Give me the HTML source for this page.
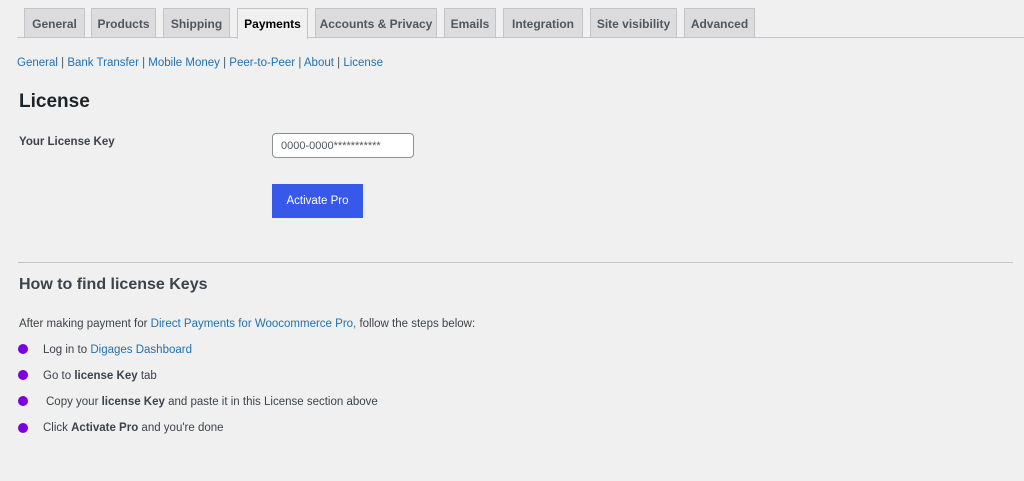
<!DOCTYPE html><html><head><style>
body{margin:0;background:#f0f0f1;font-family:"Liberation Sans",sans-serif;color:#1d2327;width:1024px;height:481px;overflow:hidden;position:relative}
.tab{position:absolute;top:8px;height:29px;background:#dcdcde;border:1px solid #c3c4c7;border-bottom:none;box-sizing:border-box;font-size:12px;font-weight:bold;color:#50575e;text-align:center;line-height:30px}
.tab.a{background:#f0f0f1;color:#000;height:31px}
.line{position:absolute;left:17px;right:0;top:37px;border-top:1px solid #c3c4c7}
a{color:#2271b1;text-decoration:none}
.abs{position:absolute;white-space:nowrap}
.b{position:absolute;left:18px;width:10px;height:10px;border-radius:50%;background:#7a00df}
.t{font-size:11.5px;color:#3c434a}
</style></head><body>
<div class="tab" style="left:24px;width:61px">General</div>
<div class="tab" style="left:91px;width:65px">Products</div>
<div class="tab" style="left:163px;width:67px">Shipping</div>
<div class="tab" style="left:315px;width:122px">Accounts &amp; Privacy</div>
<div class="tab" style="left:444px;width:52px">Emails</div>
<div class="tab" style="left:503px;width:80px">Integration</div>
<div class="tab" style="left:590px;width:87px">Site visibility</div>
<div class="tab" style="left:684px;width:71px">Advanced</div>
<div class="line"></div>
<div class="tab a" style="left:237px;width:71px">Payments</div>
<div class="abs" style="left:17px;top:57px;font-size:11.5px;color:#50575e"><a>General</a> | <a>Bank Transfer</a> | <a>Mobile Money</a> | <a>Peer-to-Peer</a> | <a>About</a> | <a>License</a></div>
<div class="abs" style="left:19px;top:91px;font-size:19px;font-weight:bold">License</div>
<div class="abs" style="left:19px;top:136px;font-size:11.5px;font-weight:bold;color:#3c434a">Your License Key</div>
<div class="abs" style="left:272px;top:133px;width:142px;height:25px;box-sizing:border-box;border:1px solid #8c8f94;border-radius:4px;background:#fff;font-size:11px;color:#50575e;line-height:25px;padding-left:8px">0000-0000***********</div>
<div class="abs" style="left:272px;top:184px;width:91px;height:34px;background:#3858e9;color:#fff;font-size:11.5px;text-align:center;line-height:34px">Activate Pro</div>
<div class="abs" style="left:18px;width:995px;top:262px;border-top:1px solid #c3c4c7"></div>
<div class="abs" style="left:19px;top:276px;font-size:16px;color:#3c434a;font-weight:600">How to find license Keys</div>
<div class="abs t" style="left:19px;top:318px">After making payment for <a>Direct Payments for Woocommerce Pro,</a> follow the steps below:</div>
<div class="b" style="top:344px"></div><div class="abs t" style="left:43px;top:344px">Log in to <a>Digages Dashboard</a></div>
<div class="b" style="top:370px"></div><div class="abs t" style="left:43px;top:370px">Go to <b>license Key</b> tab</div>
<div class="b" style="top:396px"></div><div class="abs t" style="left:46px;top:396px">Copy your <b>license Key</b> and paste it in this License section above</div>
<div class="b" style="top:423px"></div><div class="abs t" style="left:43px;top:422px">Click <b>Activate Pro</b> and you're done</div>
</body></html>
